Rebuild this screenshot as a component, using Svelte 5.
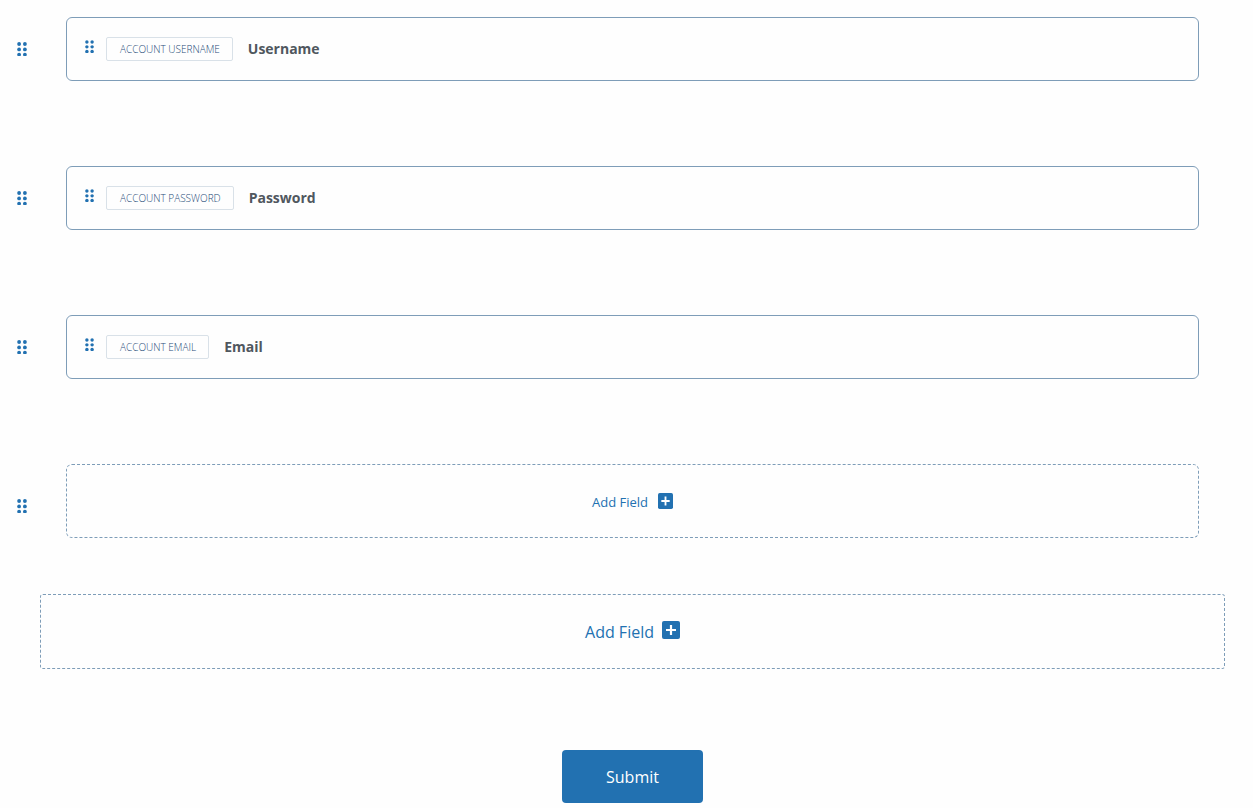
<script>
  const fields = [
    { type: 'Account Username', label: 'Username' },
    { type: 'Account Password', label: 'Password' },
    { type: 'Account Email', label: 'Email' }
  ];
</script>

{#snippet dots()}
  <svg viewBox="0 0 10 14" aria-hidden="true">
    <circle cx="2.1" cy="2" r="1.9" /><circle cx="7.9" cy="2" r="1.9" />
    <circle cx="2.1" cy="7.4" r="1.9" /><circle cx="7.9" cy="7.4" r="1.9" />
    <circle cx="2.1" cy="12.6" r="1.9" /><circle cx="7.9" cy="12.6" r="1.9" />
  </svg>
{/snippet}

{#snippet plus()}
  <svg class="plus" viewBox="0 0 18 18" preserveAspectRatio="none" aria-hidden="true">
    <rect width="18" height="18" rx="2" fill="#2271b1" />
    <path d="M9 4v10M4 9h10" stroke="#fff" stroke-width="2.2" />
  </svg>
{/snippet}

<form onsubmit={(e) => e.preventDefault()}>
  <div class="rows">
    {#each fields as field}
      <div class="row">
        <button type="button" class="handle" aria-label="Move row">{@render dots()}</button>
        <div class="field">
          <button type="button" class="handle small" aria-label="Move field">{@render dots()}</button>
          <span class="tag">{field.type}</span>
          <strong>{field.label}</strong>
        </div>
      </div>
    {/each}
    <div class="row">
      <button type="button" class="handle last" aria-label="Move row">{@render dots()}</button>
      <button type="button" class="add inner"><span>Add Field</span>{@render plus()}</button>
    </div>
  </div>
  <button type="button" class="add outer"><span>Add Field</span>{@render plus()}</button>
  <button type="submit" class="submit">Submit</button>
</form>

<style>
  :global(body) {
    background: #fefefe;
  }
  form {
    display: flex;
    flex-direction: column;
    padding: 17px 28px 5px 17px;
    font-family: 'Segoe UI', 'Open Sans', sans-serif;
  }
  button {
    margin: 0;
    padding: 0;
    border: 0;
    background: none;
    font-family: inherit;
    cursor: pointer;
  }
  .rows {
    display: flex;
    flex-direction: column;
    gap: 85px;
    padding-right: 26px;
  }
  .row {
    display: flex;
    align-items: center;
    gap: 39px;
  }
  .handle {
    flex: none;
    width: 10px;
    height: 14px;
    color: #2271b1;
    cursor: move;
  }
  .last {
    margin-top: 10px;
  }
  .small {
    width: 9px;
    height: 13px;
    margin: 0 12px 6px 0;
  }
  svg {
    display: block;
    width: 100%;
    height: 100%;
    fill: currentColor;
  }
  .field {
    display: flex;
    flex: 1;
    align-items: center;
    box-sizing: border-box;
    height: 64px;
    padding: 0 18px;
    border: 1px solid #7e9db8;
    border-radius: 6px;
  }
  .tag {
    padding: 0 12px 0 13px;
    border: 1px solid #d9e1e8;
    border-radius: 2px;
    color: #1f4c78;
    font-size: 10px;
    font-weight: 300;
    line-height: 22px;
    text-transform: uppercase;
  }
  strong {
    margin-left: 15px;
    color: #50575e;
    font-size: 14px;
    font-weight: 700;
    line-height: 20px;
  }
  .add {
    display: flex;
    align-items: center;
    justify-content: center;
    box-sizing: border-box;
    border: 1px dashed #7e9db8;
    color: #2271b1;
  }
  .inner {
    flex: 1;
    gap: 10px;
    height: 74px;
    padding-top: 2px;
    border-radius: 6px;
    font-size: 13px;
  }
  .outer {
    gap: 8px;
    height: 75px;
    margin: 56px 0 81px 23px;
    border-radius: 3px;
    font-size: 16px;
  }
  .plus {
    width: 18px;
    height: 18px;
    margin-bottom: 3px;
  }
  .inner .plus {
    width: 15px;
    height: 16px;
  }
  .submit {
    align-self: center;
    width: 141px;
    height: 53px;
    margin-left: 23px;
    border-radius: 4px;
    background: #2271b1;
    color: #fff;
    font-size: 16px;
  }
</style>
